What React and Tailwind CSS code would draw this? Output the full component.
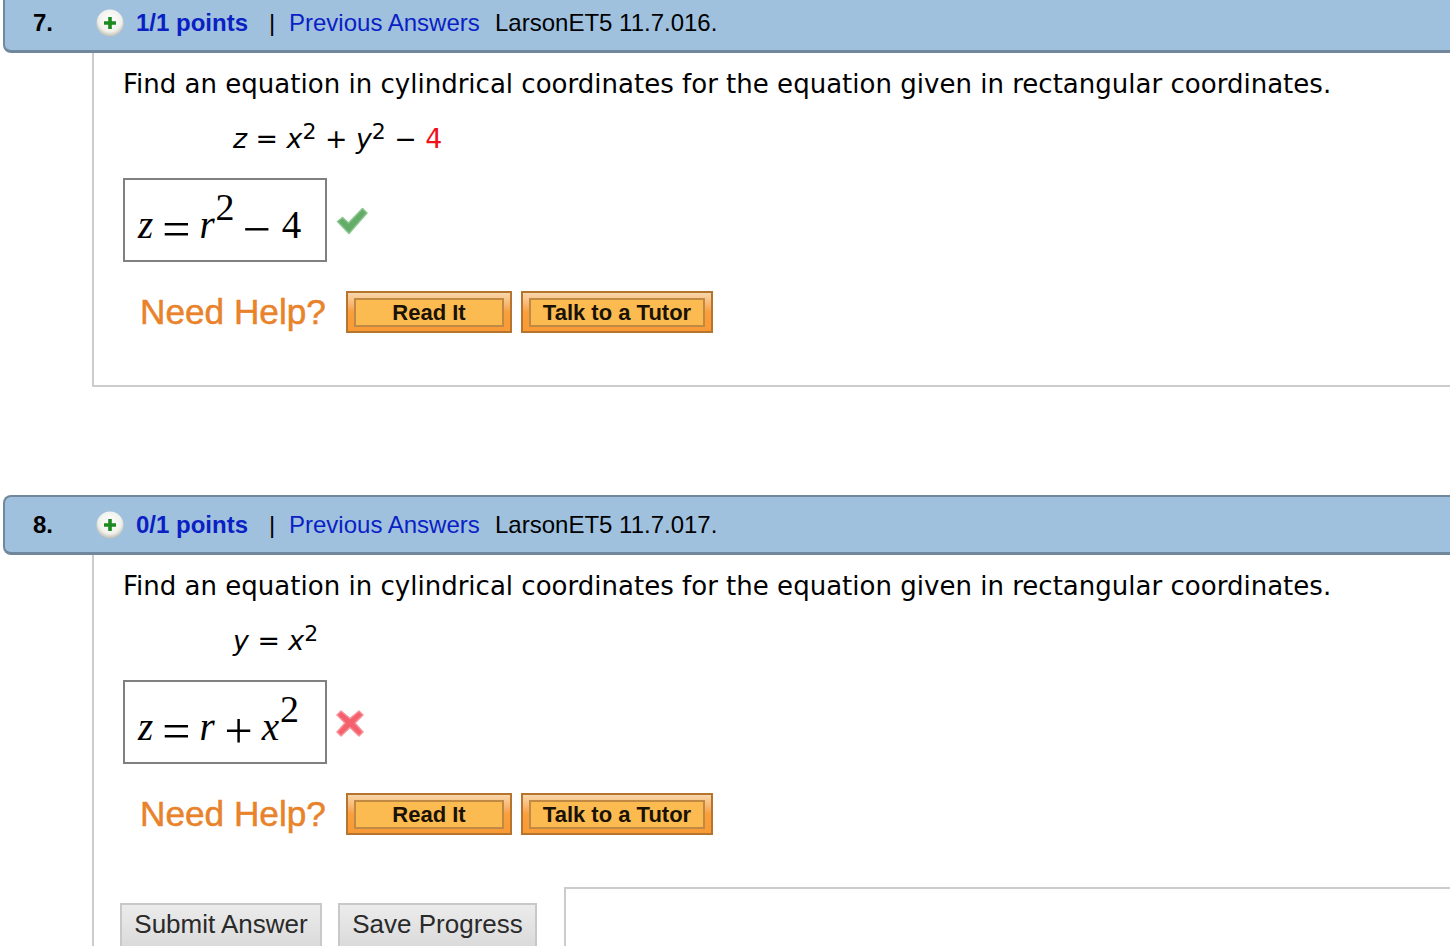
import React from 'react';

const sans = 'font-["Liberation_Sans",Arial,sans-serif]';

function PlusBadge() {
  return (
    <svg width="30" height="30" viewBox="0 0 30 30" className="shrink-0">
      <defs>
        <radialGradient id="badge" cx="50%" cy="40%" r="60%">
          <stop offset="0%" stopColor="#ffffff" />
          <stop offset="70%" stopColor="#f1f1ec" />
          <stop offset="100%" stopColor="#bdbdb4" />
        </radialGradient>
      </defs>
      <circle cx="15" cy="15" r="13.5" fill="url(#badge)" />
      <path d="M13.2 9h3.6v4.2H21v3.6h-4.2V21h-3.6v-4.2H9v-3.6h4.2z" fill="#1c8a1f" />
    </svg>
  );
}

function CheckMark() {
  return (
    <svg width="32" height="28" viewBox="0 0 32 28">
      <path d="M1.5 14.5 L6.5 10.5 L12.5 16 L26.5 1.5 L31 6 L13 26.5 Z" fill="#63ad68" stroke="#8bc48e" strokeWidth="1.5" strokeLinejoin="round" />
    </svg>
  );
}

function CrossMark() {
  return (
    <svg width="28" height="28" viewBox="0 0 28 28">
      <path d="M5 2 L14 9.5 L23 2 L27 6 L19 14 L27 23 L23 27 L14 18.5 L5 27 L1 23 L9 14 L1 6 Z" fill="#f4606c" stroke="#f8929a" strokeWidth="1.5" strokeLinejoin="round" />
    </svg>
  );
}

function HelpButton({ label, width }) {
  return (
    <div className={`${width} h-[42px] border-2 border-[#b5752f] bg-gradient-to-b from-[#f7d7ab] via-[#f99f3c] to-[#f99a35] px-[6px] pt-[5px] pb-[4px]`}>
      <div className={`flex h-full items-center justify-center border-2 border-[#c08a45] bg-[#fbbb50] ${sans} text-[22px] font-bold text-[#1a1206]`}>
        {label}
      </div>
    </div>
  );
}

function NeedHelp() {
  return (
    <div className="ml-[17px] flex items-center">
      <span className={`${sans} w-[206px] pb-[1px] text-[35.2px] leading-[41px] text-[#e8832b] [-webkit-text-stroke:0.5px_#e8832b]`}>Need Help?</span>
      <HelpButton label="Read It" width="w-[166px]" />
      <div className="w-[9px]" />
      <HelpButton label="Talk to a Tutor" width="w-[192px]" />
    </div>
  );
}

function Header({ number, points, code, className }) {
  return (
    <div className={`flex items-center border-b-[3px] border-l-[2px] border-[#71889c] bg-[#9fc1de] ${sans} ml-[3px] text-[24px] ${className}`}>
      <span className="ml-[28px] w-[62px] font-bold text-black">{number}</span>
      <PlusBadge />
      <span className="ml-[11px] w-[133px] font-bold text-[#0a1fc4]">{points}</span>
      <span className="w-[20px] text-black">|</span>
      <span className="w-[206px] text-[#0a1fc4]">Previous Answers</span>
      <span className="text-black">{code}</span>
    </div>
  );
}

function Prompt() {
  return (
    <p className='font-["DejaVu_Sans",Verdana,sans-serif] text-[26.04px] leading-[32px] text-black'>
      Find an equation in cylindrical coordinates for the equation given in rectangular coordinates.
    </p>
  );
}

function Sup({ children }) {
  return <span className="relative -top-[9px] text-[22px] leading-none">{children}</span>;
}

function AnswerBox({ children, mark }) {
  return (
    <div className="flex items-start">
      <div className='flex h-[84px] w-[204px] items-end border-2 border-[#808080] pb-[13px] pl-[13px] font-["Liberation_Serif","Times_New_Roman",serif] text-[39px] leading-[44px] text-black'>
        {children}
      </div>
      <div className="ml-[9px] mt-[29px]">{mark}</div>
    </div>
  );
}

function MathOp({ children, className }) {
  return <span className={`relative top-[4px] text-[50px] leading-[44px] ${className}`}>{children}</span>;
}

const eqClass = 'ml-[110px] mt-[19px] h-[40px] font-["DejaVu_Sans",Verdana,sans-serif] text-[26.8px] leading-[40px] text-black';
const mathSup = 'relative -top-[21px] text-[38px] leading-none';

export default function App() {
  return (
    <div className="h-[946px] w-[1450px] overflow-hidden bg-white">
      <Header number="7." points="1/1 points" code="LarsonET5 11.7.016." className="h-[53px] rounded-bl-[8px] pb-[4px]" />
      <div className="ml-[92px] h-[334px] border-b-2 border-l-2 border-[#cccccc] pl-[29px] pt-[15px]">
        <Prompt />
        <div className={eqClass}>
          <i>z</i> = <i>x</i><Sup>2</Sup> + <i>y</i><Sup>2</Sup> − <span className="text-[#f0101c]">4</span>
        </div>
        <div className="mt-[19px]">
          <AnswerBox mark={<CheckMark />}>
            <i>z</i>
            <MathOp className="ml-[9px] mr-[9px]">=</MathOp>
            <i>r</i>
            <span className={`${mathSup} ml-[1px]`}>2</span>
            <MathOp className="ml-[8px] mr-[11px]">−</MathOp>
            <span>4</span>
          </AnswerBox>
        </div>
        <div className="mt-[29px]">
          <NeedHelp />
        </div>
      </div>

      <div className="h-[108px]" />

      <Header number="8." points="0/1 points" code="LarsonET5 11.7.017." className="h-[60px] rounded-l-[8px] border-t-[2px] pt-[1px]" />
      <div className="ml-[92px] h-[400px] border-l-2 border-[#cccccc] pl-[29px] pt-[15px]">
        <Prompt />
        <div className={eqClass}>
          <i>y</i> = <i>x</i><Sup>2</Sup>
        </div>
        <div className="mt-[19px]">
          <AnswerBox mark={<CrossMark />}>
            <i>z</i>
            <MathOp className="ml-[9px] mr-[9px]">=</MathOp>
            <i>r</i>
            <MathOp className="ml-[10px] mr-[9px]">+</MathOp>
            <i>x</i>
            <span className={`${mathSup} ml-[1px]`}>2</span>
          </AnswerBox>
        </div>
        <div className="mt-[29px]">
          <NeedHelp />
        </div>
        <div className="flex items-start">
          <div className="mt-[68px] ml-[-3px] flex gap-[16px]">
            <button className={`h-[60px] w-[202px] self-start border-2 border-[#c8c8c8] bg-gradient-to-b from-[#ececec] to-[#d4d4d4] pb-[17px] ${sans} text-[26px] text-[#2a2a2a]`}>Submit Answer</button>
            <button className={`h-[60px] w-[199px] self-start border-2 border-[#c8c8c8] bg-gradient-to-b from-[#ececec] to-[#d4d4d4] pb-[17px] ${sans} text-[26px] text-[#2a2a2a]`}>Save Progress</button>
          </div>
          <div className="ml-[27px] mt-[52px] h-[80px] flex-1 border-l-2 border-t-2 border-[#cccccc]" />
        </div>
      </div>
    </div>
  );
}
